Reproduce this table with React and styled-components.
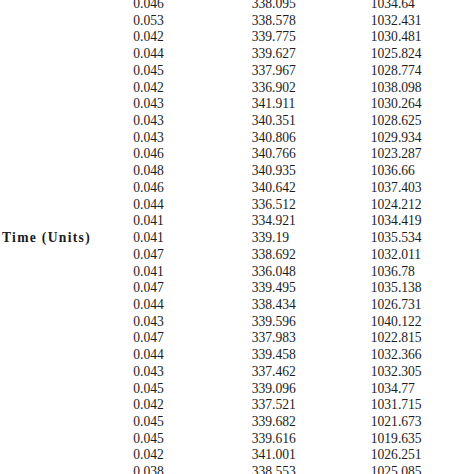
import React from 'react';
import styled, { createGlobalStyle } from 'styled-components';

const GlobalStyle = createGlobalStyle`
  html, body {
    margin: 0;
    padding: 0;
    background: #ffffff;
  }
  body {
    overflow: hidden;
  }
`;

const rows = [
  ['0.046', '338.095', '1034.64'],
  ['0.053', '338.578', '1032.431'],
  ['0.042', '339.775', '1030.481'],
  ['0.044', '339.627', '1025.824'],
  ['0.045', '337.967', '1028.774'],
  ['0.042', '336.902', '1038.098'],
  ['0.043', '341.911', '1030.264'],
  ['0.043', '340.351', '1028.625'],
  ['0.043', '340.806', '1029.934'],
  ['0.046', '340.766', '1023.287'],
  ['0.048', '340.935', '1036.66'],
  ['0.046', '340.642', '1037.403'],
  ['0.044', '336.512', '1024.212'],
  ['0.041', '334.921', '1034.419'],
  ['0.041', '339.19', '1035.534'],
  ['0.047', '338.692', '1032.011'],
  ['0.041', '336.048', '1036.78'],
  ['0.047', '339.495', '1035.138'],
  ['0.044', '338.434', '1026.731'],
  ['0.043', '339.596', '1040.122'],
  ['0.047', '337.983', '1022.815'],
  ['0.044', '339.458', '1032.366'],
  ['0.043', '337.462', '1032.305'],
  ['0.045', '339.096', '1034.77'],
  ['0.042', '337.521', '1031.715'],
  ['0.045', '339.682', '1021.673'],
  ['0.045', '339.616', '1019.635'],
  ['0.042', '341.001', '1026.251'],
  ['0.038', '338.553', '1025.085'],
];

const LABEL_ROW = 14;

const Table = styled.div`
  display: grid;
  grid-template-columns: 131.3px 118.4px 119px 1fr;
  grid-auto-rows: 16.73px;
  padding-left: 2px;
  margin-top: -4px;
  font-family: 'Liberation Serif', 'Times New Roman', serif;
  font-size: 13.6px;
  color: #1c1c1c;
`;

const Cell = styled.div`
  line-height: 16.73px;
  white-space: nowrap;
`;

const Label = styled(Cell)`
  font-weight: bold;
  letter-spacing: ${(p) => p.$spread}px;
`;

export default function App() {
  return (
    <>
      <GlobalStyle />
      <Table>
        {rows.map((r, i) => (
          <React.Fragment key={i}>
            {i === LABEL_ROW ? (
              <Label $spread={1.3}>Time (Units)</Label>
            ) : (
              <Cell />
            )}
            <Cell>{r[0]}</Cell>
            <Cell>{r[1]}</Cell>
            <Cell>{r[2]}</Cell>
          </React.Fragment>
        ))}
      </Table>
    </>
  );
}
